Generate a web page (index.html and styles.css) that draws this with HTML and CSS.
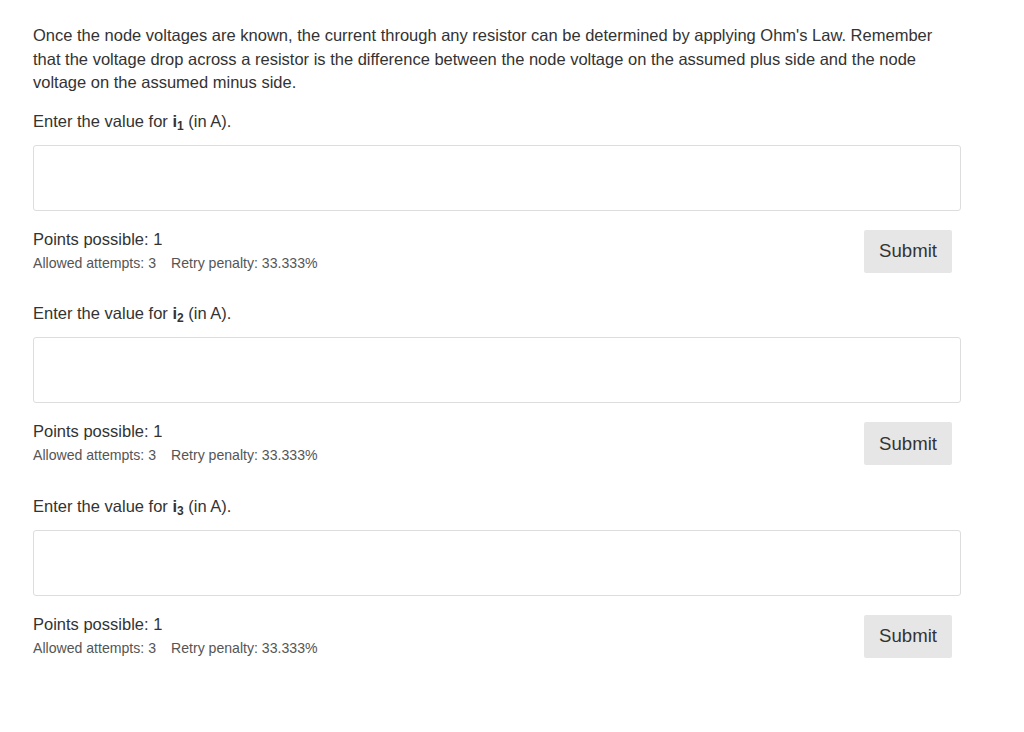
FILE: index.html
```html
<!DOCTYPE html>
<html lang="en">
<head>
<meta charset="utf-8">
<title>Problem</title>
<link rel="stylesheet" href="styles.css">
</head>
<body>
<main class="problem">
  <p class="intro">Once the node voltages are known, the current through any resistor can be determined by applying Ohm's Law. Remember that the voltage drop across a resistor is the difference between the node voltage on the assumed plus side and the node voltage on the assumed minus side.</p>

  <section class="question">
    <p class="label">Enter the value for <b>i<sub>1</sub></b> (in A).</p>
    <input class="answer" type="text" aria-label="i1">
    <div class="footer">
      <div class="meta">
        <div class="points">Points possible: 1</div>
        <div class="attempts"><span>Allowed attempts: 3</span><span>Retry penalty: 33.333%</span></div>
      </div>
      <button class="submit" type="button">Submit</button>
    </div>
  </section>

  <section class="question">
    <p class="label">Enter the value for <b>i<sub>2</sub></b> (in A).</p>
    <input class="answer" type="text" aria-label="i2">
    <div class="footer">
      <div class="meta">
        <div class="points">Points possible: 1</div>
        <div class="attempts"><span>Allowed attempts: 3</span><span>Retry penalty: 33.333%</span></div>
      </div>
      <button class="submit" type="button">Submit</button>
    </div>
  </section>

  <section class="question">
    <p class="label">Enter the value for <b>i<sub>3</sub></b> (in A).</p>
    <input class="answer" type="text" aria-label="i3">
    <div class="footer">
      <div class="meta">
        <div class="points">Points possible: 1</div>
        <div class="attempts"><span>Allowed attempts: 3</span><span>Retry penalty: 33.333%</span></div>
      </div>
      <button class="submit" type="button">Submit</button>
    </div>
  </section>
</main>
</body>
</html>
```
FILE: styles.css
```css
html, body {
  margin: 0;
  padding: 0;
  background: #ffffff;
}

body {
  font-family: "Liberation Sans", Arial, sans-serif;
  color: #333333;
}

.problem {
  width: 928px;
  padding: 24px 0 0 33px;
  display: flex;
  flex-direction: column;
  gap: 29.5px;
}

.intro {
  margin: 0;
  font-size: 16.5px;
  line-height: 23.5px;
}

.question {
  display: flex;
  flex-direction: column;
}

.intro + .question {
  margin-top: -14.5px;
}

.label {
  margin: 0;
  font-size: 16.5px;
  line-height: 23.5px;
}

.label b {
  font-weight: bold;
}

.label sub {
  font-size: 12px;
  line-height: 0;
  vertical-align: -3px;
}

.answer {
  margin-top: 11.5px;
  box-sizing: border-box;
  height: 66px;
  width: 928px;
  border: 1px solid #dddddd;
  border-radius: 3px;
  background: #ffffff;
  font: inherit;
  padding: 0 10px;
}

.footer {
  margin-top: 17px;
  display: flex;
  justify-content: space-between;
  align-items: flex-start;
}

.points {
  font-size: 16.5px;
  line-height: 23px;
}

.attempts {
  margin-top: 2px;
  font-size: 14.1px;
  line-height: 20px;
  color: #555555;
  display: flex;
  gap: 15px;
}

.submit {
  margin-top: 2px;
  margin-right: 9px;
  width: 88px;
  height: 43px;
  border: none;
  border-radius: 2px;
  background: #e6e6e6;
  color: #333333;
  font-family: "Liberation Sans", Arial, sans-serif;
  font-size: 18.6px;
  padding: 0;
}
```
